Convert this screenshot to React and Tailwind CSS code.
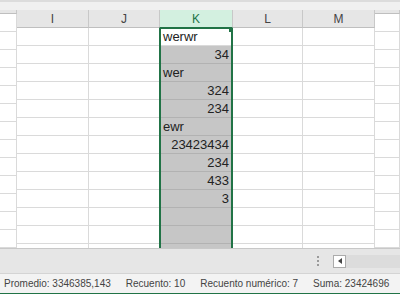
import React from 'react';

const font = { fontFamily: '"Liberation Sans", Arial, sans-serif' };

const kValues = [
    { v: 'werwr', t: 'text' },
    { v: '34', t: 'num' },
    { v: 'wer', t: 'text' },
    { v: '324', t: 'num' },
    { v: '234', t: 'num' },
    { v: 'ewr', t: 'text' },
    { v: '23423434', t: 'num' },
    { v: '234', t: 'num' },
    { v: '433', t: 'num' },
    { v: '3', t: 'num' },
    { v: '', t: 'text' },
    { v: '', t: 'text' },
    { v: '', t: 'text' },
];

const rows = Array.from({ length: 13 });

const PlainColumn = ({ label, width, last, noRight }) => (
    <div className={`flex flex-col shrink-0 ${last ? 'flex-1' : ''}`} style={last ? undefined : { width }}>
        <div
            className={`h-[18px] flex items-center justify-center bg-[#e6e6e6] border-b border-[#bfbfbf] text-[12px] text-[#444] ${noRight ? '' : 'border-r border-r-[#c8c8c8]'}`}
        >
            {label}
        </div>
        {rows.map((_, i) => (
            <div
                key={i}
                className={`h-[18px] shrink-0 bg-white border-b border-[#dadada] ${noRight ? '' : 'border-r border-r-[#dadada]'}`}
            />
        ))}
    </div>
);

const SelectedColumn = () => (
    <div className="flex flex-col shrink-0 w-[74px]">
        <div className="h-[18px] flex items-center justify-center bg-[#d3f0e0] border-x border-[#c8c8c8] border-b border-b-[#217346] text-[12px] text-[#217346]">
            K
        </div>
        <div className="relative flex flex-col border-x-2 border-t border-[#217346]">
            <div className="absolute -right-[2px] -top-[1px] w-[4px] h-[4px] bg-[#217346] z-10" />
            {kValues.map((c, i) => (
                <div
                    key={i}
                    className={`shrink-0 flex items-end px-[2px] pb-[1px] text-[13px] leading-[15px] text-[#222] border-b ${
                        i === 0 ? 'h-[17px] bg-white border-[#dadada]' : 'h-[18px] bg-[#c6c6c6] border-[#b2b2b2]'
                    } ${c.t === 'num' ? 'justify-end' : 'justify-start'}`}
                >
                    {c.v}
                </div>
            ))}
        </div>
    </div>
);

export default function App() {
    return (
        <div className="w-[400px] h-[294px] overflow-hidden bg-white flex flex-col" style={font}>
            {/* strip above headers */}
            <div className="h-[10px] shrink-0 bg-[#f0f0f0] border-t-2 border-t-[#dcdcdc]" />

            {/* Grid */}
            <div className="h-[238px] shrink-0 overflow-hidden flex">
                <PlainColumn label="" width={17} />
                <PlainColumn label="I" width={72} />
                <PlainColumn label="J" width={70} noRight />
                <SelectedColumn />
                <PlainColumn label="L" width={70} />
                <PlainColumn label="M" width={72} />
                <PlainColumn label="" last />
            </div>

            {/* Horizontal scroll band */}
            <div className="h-[25px] shrink-0 bg-[#e6e6e6] border-t border-[#c8c8c8] flex items-center">
                <div className="w-[317px] shrink-0" />
                <div className="flex flex-col gap-[2px] w-[2px]">
                    <span className="w-[2px] h-[2px] bg-[#9a9a9a]" />
                    <span className="w-[2px] h-[2px] bg-[#9a9a9a]" />
                    <span className="w-[2px] h-[2px] bg-[#9a9a9a]" />
                </div>
                <div className="w-[14px] shrink-0" />
                <div className="w-[13px] h-[13px] shrink-0 bg-white border border-[#ababab] flex items-center justify-center">
                    <svg width="4" height="6" viewBox="0 0 4 6">
                        <path d="M4 0 L0 3 L4 6 Z" fill="#444" />
                    </svg>
                </div>
                <div className="flex-1 h-[13px] bg-[#dcdcdc]" />
            </div>

            {/* Status bar */}
            <div className="flex-1 bg-[#f3f3f3] border-t border-[#d4d4d4] border-b border-b-[#217346] flex items-center pl-[4px] gap-[15px] text-[10px] text-[#444] whitespace-nowrap">
                <span>Promedio: 3346385,143</span>
                <span>Recuento: 10</span>
                <span>Recuento numérico: 7</span>
                <span>Suma: 23424696</span>
            </div>
        </div>
    );
}
